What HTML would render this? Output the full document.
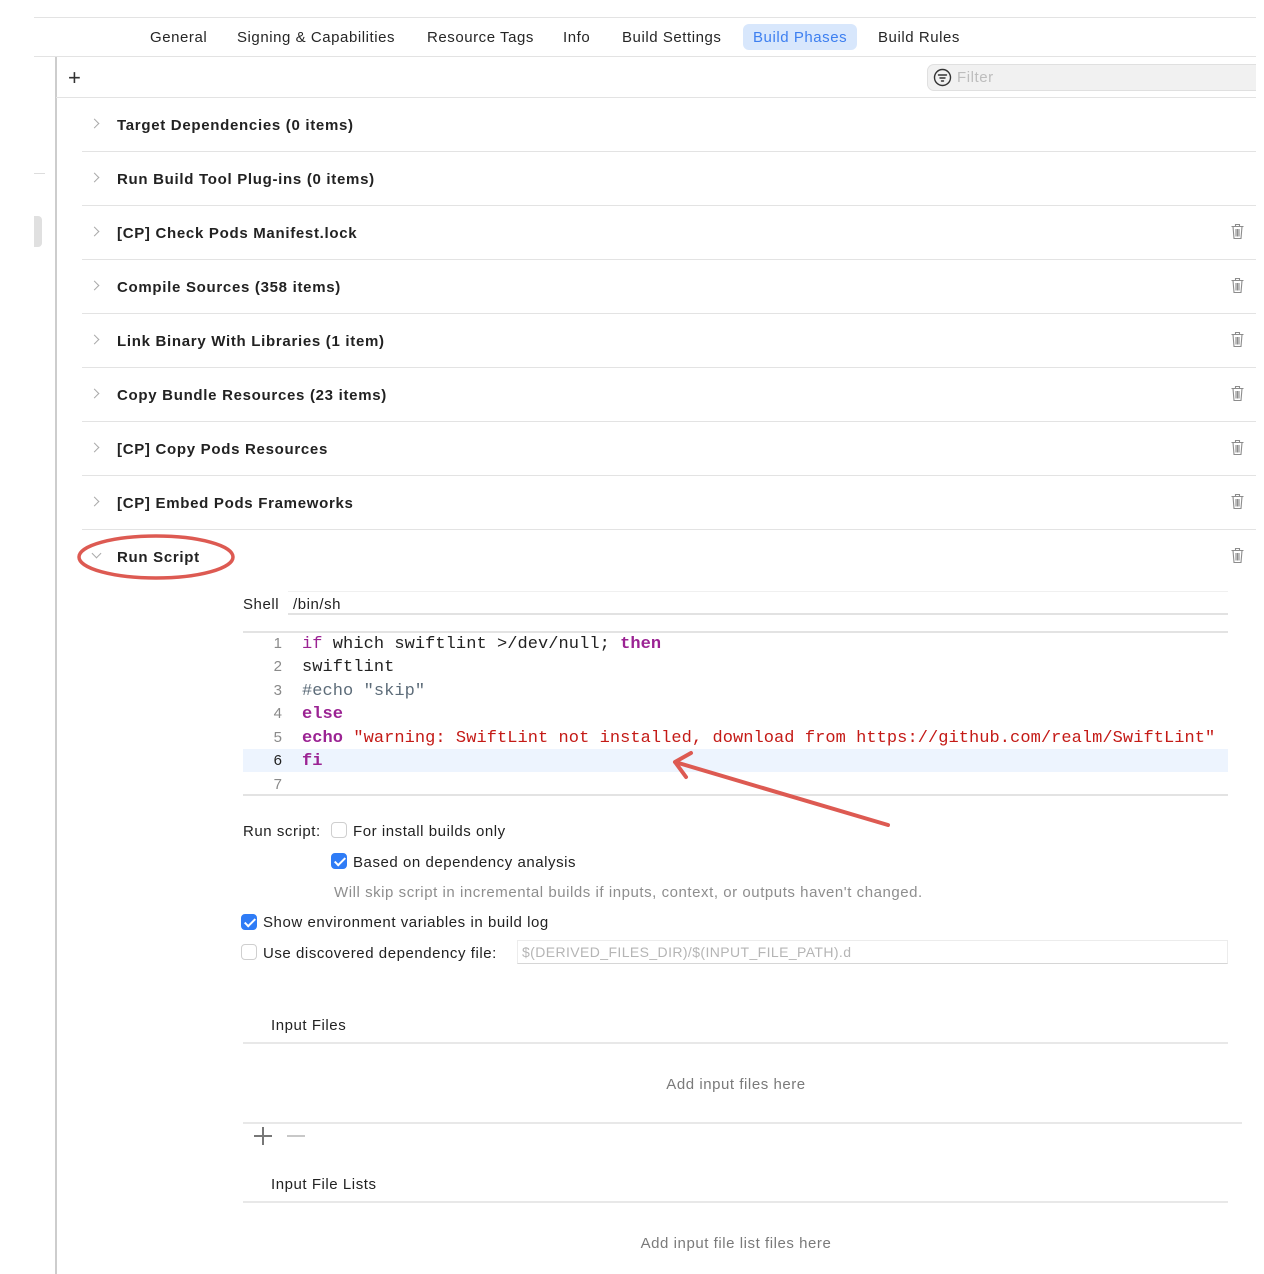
<!DOCTYPE html>
<html><head><meta charset="utf-8">
<style>
*{margin:0;padding:0;box-sizing:border-box}
body{width:1264px;height:1274px;background:#fff;position:relative;overflow:hidden;font-family:"Liberation Sans",sans-serif;color:#222;font-size:15px;letter-spacing:0.55px}
.a{position:absolute;white-space:nowrap}
.hl{position:absolute;height:1px;background:#e3e3e3}
.tab{position:absolute;top:29px;font-size:15px;color:#262626}
.row{position:absolute;left:117px;font-weight:bold;font-size:15px;color:#222;letter-spacing:0.7px;margin-top:1px}
.chev{position:absolute;left:92px;width:7px;height:7px;border-right:1.5px solid #aaa;border-top:1.5px solid #aaa;transform:rotate(45deg)}
.trash{position:absolute;left:1229px}
.code{position:absolute;font-family:"Liberation Mono",monospace;font-size:17px;color:#222;letter-spacing:0.06px;margin-top:2px}
.ln{position:absolute;left:262px;width:20px;text-align:right;font-family:"Liberation Sans",sans-serif;font-size:15px;color:#8a8a8a;letter-spacing:0}
.k{color:#9b2393;font-weight:bold}
.s{color:#c41a16}
.cb{position:absolute;width:16px;height:16px;border:1px solid #cfcfcf;border-radius:4px;background:#fff}
.cb.on{background:#2f7cf6;border-color:#2f7cf6}
.cb.on::after{content:"";position:absolute;left:4.5px;top:1px;width:4px;height:9px;border-right:2px solid #fff;border-bottom:2px solid #fff;transform:rotate(45deg)}
</style></head><body>
<div class="hl" style="left:34px;top:17px;width:1222px"></div>
<div class="tab" style="left:150px">General</div>
<div class="tab" style="left:237px">Signing &amp; Capabilities</div>
<div class="tab" style="left:427px">Resource Tags</div>
<div class="tab" style="left:563px">Info</div>
<div class="tab" style="left:622px">Build Settings</div>
<div class="a" style="left:743px;top:24px;width:114px;height:26px;background:#d8e7fc;border-radius:6px"></div>
<div class="tab" style="left:753px;color:#3d7ff0">Build Phases</div>
<div class="tab" style="left:878px">Build Rules</div>
<div class="hl" style="left:34px;top:56px;width:1222px"></div>

<div class="a" style="left:55px;top:57px;width:2px;height:1217px;background:#cdcdcd"></div>
<div class="a" style="left:34px;top:173px;width:11px;height:1px;background:#ddd"></div>
<div class="a" style="left:34px;top:216px;width:8px;height:31px;background:#e0e0e0;border-radius:0 4px 4px 0"></div>

<div class="a" style="left:68px;top:65px;font-size:22px;color:#333;font-weight:300">+</div>
<div class="a" style="left:927px;top:64px;width:329px;height:27px;background:#f1f1f1;border:1px solid #e0e0e0;border-right:none;border-radius:7px 0 0 7px"></div>
<svg class="a" style="left:933px;top:68px" width="19" height="19" viewBox="0 0 19 19"><circle cx="9.5" cy="9.5" r="8" fill="none" stroke="#333" stroke-width="1.4"/><path d="M5.5 7h8M7 10h5M8.5 13h2" stroke="#333" stroke-width="1.4" stroke-linecap="round"/></svg>
<div class="a" style="left:957px;top:69px;color:#bdbdbd;font-size:15px">Filter</div>
<div class="hl" style="left:56px;top:97px;width:1200px"></div>

<div class="chev" style="top:120px;left:91px"></div><div class="row" style="top:116px">Target Dependencies (0 items)</div>
<div class="hl" style="left:82px;top:151px;width:1174px"></div>
<div class="chev" style="top:174px;left:91px"></div><div class="row" style="top:170px">Run Build Tool Plug-ins (0 items)</div>
<div class="hl" style="left:82px;top:205px;width:1174px"></div>
<div class="chev" style="top:228px;left:91px"></div><div class="row" style="top:224px">[CP] Check Pods Manifest.lock</div>
<div class="hl" style="left:82px;top:259px;width:1174px"></div>
<div class="chev" style="top:282px;left:91px"></div><div class="row" style="top:278px">Compile Sources (358 items)</div>
<div class="hl" style="left:82px;top:313px;width:1174px"></div>
<div class="chev" style="top:336px;left:91px"></div><div class="row" style="top:332px">Link Binary With Libraries (1 item)</div>
<div class="hl" style="left:82px;top:367px;width:1174px"></div>
<div class="chev" style="top:390px;left:91px"></div><div class="row" style="top:386px">Copy Bundle Resources (23 items)</div>
<div class="hl" style="left:82px;top:421px;width:1174px"></div>
<div class="chev" style="top:444px;left:91px"></div><div class="row" style="top:440px">[CP] Copy Pods Resources</div>
<div class="hl" style="left:82px;top:475px;width:1174px"></div>
<div class="chev" style="top:498px;left:91px"></div><div class="row" style="top:494px">[CP] Embed Pods Frameworks</div>
<div class="hl" style="left:82px;top:529px;width:1174px"></div>
<div class="chev" style="top:550px;left:93px;transform:rotate(135deg)"></div><div class="row" style="top:548px">Run Script</div>

<svg width="0" height="0" style="position:absolute"><defs><g id="tr"><path d="M2.5 4.5h12M6.5 4.5V2.5h4v2M4 4.5l1 12h7l1-12M7 7v7.5M8.5 7v7.5M10 7v7.5" fill="none" stroke="#8c8c8c" stroke-width="1.1"/></g></defs></svg>
<svg class="trash" style="top:222px" width="17" height="19"><use href="#tr"/></svg>
<svg class="trash" style="top:276px" width="17" height="19"><use href="#tr"/></svg>
<svg class="trash" style="top:330px" width="17" height="19"><use href="#tr"/></svg>
<svg class="trash" style="top:384px" width="17" height="19"><use href="#tr"/></svg>
<svg class="trash" style="top:438px" width="17" height="19"><use href="#tr"/></svg>
<svg class="trash" style="top:492px" width="17" height="19"><use href="#tr"/></svg>
<svg class="trash" style="top:546px" width="17" height="19"><use href="#tr"/></svg>

<div class="a" style="left:243px;top:596px">Shell</div>
<div class="a" style="left:288px;top:591px;width:940px;height:24px;border-bottom:2px solid #e2e2e2;border-top:1px solid #f0f0f0"></div>
<div class="a" style="left:293px;top:596px">/bin/sh</div>

<div class="hl" style="left:243px;top:631px;width:985px;height:2px"></div>
<div class="a" style="left:243px;top:749px;width:985px;height:23px;background:#edf4fe"></div>
<div class="ln" style="top:635px">1</div><div class="code" style="left:302px;top:633px"><span class="k" style="font-weight:normal">if</span> which swiftlint &gt;/dev/null; <span class="k">then</span></div>
<div class="ln" style="top:658px">2</div><div class="code" style="left:302px;top:656px">swiftlint</div>
<div class="ln" style="top:682px">3</div><div class="code" style="left:302px;top:680px;color:#5d6c79">#echo "skip"</div>
<div class="ln" style="top:705px">4</div><div class="code" style="left:302px;top:703px"><span class="k">else</span></div>
<div class="ln" style="top:729px">5</div><div class="code" style="left:302px;top:727px"><span class="k">echo</span> <span class="s">"warning: SwiftLint not installed, download from https://github.com/realm/SwiftLint"</span></div>
<div class="ln" style="top:752px;color:#222">6</div><div class="code" style="left:302px;top:750px"><span class="k">fi</span></div>
<div class="ln" style="top:776px">7</div>
<div class="hl" style="left:243px;top:794px;width:985px;height:2px"></div>

<svg class="a" style="left:0;top:0" width="1264" height="1274">
<ellipse cx="156" cy="557" rx="77" ry="21" fill="none" stroke="#dd5a52" stroke-width="3.5"/>
<path d="M888 825L675 762M675 762L691 753M675 762L686 777" fill="none" stroke="#dd5a52" stroke-width="4" stroke-linecap="round"/>
</svg>

<div class="a" style="left:243px;top:823px">Run script:</div>
<div class="cb" style="left:331px;top:822px"></div><div class="a" style="left:353px;top:823px">For install builds only</div>
<div class="cb on" style="left:331px;top:853px"></div><div class="a" style="left:353px;top:854px">Based on dependency analysis</div>
<div class="a" style="left:334px;top:884px;color:#8e8e8e">Will skip script in incremental builds if inputs, context, or outputs haven't changed.</div>
<div class="cb on" style="left:241px;top:914px"></div><div class="a" style="left:263px;top:914px">Show environment variables in build log</div>
<div class="cb" style="left:241px;top:944px"></div><div class="a" style="left:263px;top:945px">Use discovered dependency file:</div>
<div class="a" style="left:517px;top:940px;width:711px;height:24px;border:1px solid #ececec;border-bottom:1px solid #d6d6d6"></div>
<div class="a" style="left:522px;top:944px;color:#b5b5b5;font-size:14px;letter-spacing:0.4px">$(DERIVED_FILES_DIR)/$(INPUT_FILE_PATH).d</div>

<div class="a" style="left:271px;top:1017px">Input Files</div>
<div class="hl" style="left:243px;top:1042px;width:985px;height:2px;background:#e8e8e8"></div>
<div class="a" style="left:586px;top:1076px;width:300px;text-align:center;color:#7a7a7a">Add input files here</div>
<div class="hl" style="left:243px;top:1122px;width:999px;height:2px;background:#e8e8e8"></div>
<div class="a" style="left:254px;top:1135px;width:18px;height:1.5px;background:#777"></div>
<div class="a" style="left:262px;top:1127px;width:1.5px;height:18px;background:#777"></div>
<div class="a" style="left:287px;top:1135px;width:18px;height:1.5px;background:#c8c8c8"></div>
<div class="a" style="left:271px;top:1176px">Input File Lists</div>
<div class="hl" style="left:243px;top:1201px;width:985px;height:2px;background:#e8e8e8"></div>
<div class="a" style="left:536px;top:1235px;width:400px;text-align:center;color:#7a7a7a">Add input file list files here</div>
</body></html>
